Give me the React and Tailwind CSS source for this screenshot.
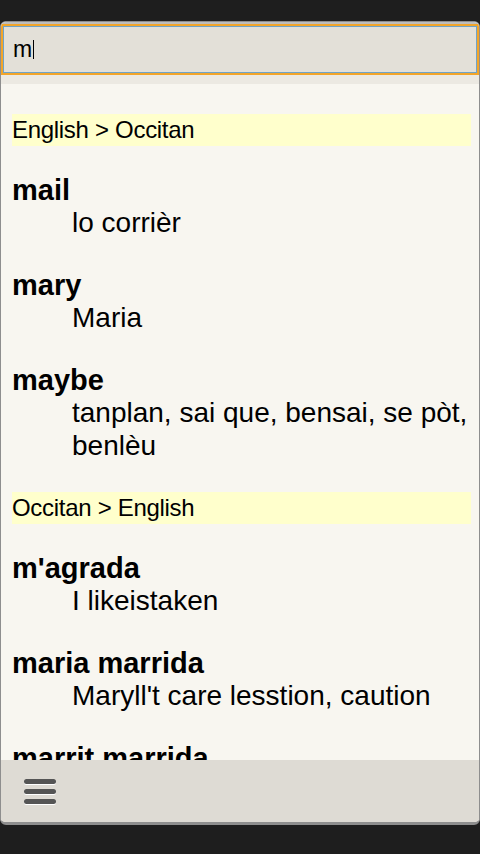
import React from 'react';

const sections = [
  {
    title: 'English > Occitan',
    entries: [
      { word: 'mail', tr: 'lo corrièr' },
      { word: 'mary', tr: 'Maria' },
      { word: 'maybe', tr: 'tanplan, sai que, bensai, se pòt, benlèu' },
    ],
  },
  {
    title: 'Occitan > English',
    entries: [
      { word: "m'agrada", tr: 'I likeistaken' },
      { word: 'maria marrida', tr: "Maryll't care lesstion, caution" },
      { word: 'marrit marrida', tr: 'bad, wicked' },
    ],
  },
];

const Menu = () => (
  <div className="flex flex-col gap-[5px] w-[32px]">
    <div className="h-[5px] rounded-full bg-[#555555] shadow-[0_1px_0_#ffffff]" />
    <div className="h-[5px] rounded-full bg-[#555555] shadow-[0_1px_0_#ffffff]" />
    <div className="h-[5px] rounded-full bg-[#555555] shadow-[0_1px_0_#ffffff]" />
  </div>
);

export default function App() {
  return (
    <div
      className="w-[480px] h-[854px] bg-[#1e1e1e] flex flex-col overflow-hidden text-black"
      style={{ fontFamily: '"Liberation Sans", Arial, sans-serif' }}
    >
      <div className="h-[21px] shrink-0" />
      <div className="h-[804px] shrink-0 flex flex-col rounded-[6px] border-x border-t border-b-[3px] border-[#8e8e8e] overflow-hidden bg-[#f8f6f0]">
        {/* search field */}
        <div className="shrink-0 bg-[#ece9e2]">
          <div className="h-[2px] bg-[#bdbdbd]" />
          <div className="h-[51px] border-2 border-[#f2a52a]">
            <div className="h-full border border-[#6fa3c7] bg-[#e3e0d8] flex items-center pl-[9px]">
              <span className="text-[23px] leading-none">m</span>
              <span className="w-px h-[19px] bg-black ml-px" />
            </div>
          </div>
          <div className="h-[9px]" />
        </div>

        {/* results */}
        <div className="flex-1 overflow-hidden pl-[11px] pr-[8px]">
          {sections.map(sec => (
            <div key={sec.title} className="mt-[30px]">
              <div className="h-[32px] bg-[#ffffcc] text-[24px] leading-[32px] tracking-[-0.3px]">
                {sec.title}
              </div>
              {sec.entries.map((e, i) => (
                <div key={e.word} className={i === 0 ? 'mt-[28px]' : 'mt-[30px]'}>
                  <div className="text-[29px] font-bold leading-[32px]">{e.word}</div>
                  <div className="pl-[60px] text-[28px] leading-[33px]">{e.tr}</div>
                </div>
              ))}
            </div>
          ))}
        </div>

        {/* bottom bar */}
        <div className="h-[62px] shrink-0 bg-[#dedbd4] pl-[23px] pt-[19px]">
          <Menu />
        </div>
      </div>
    </div>
  );
}
